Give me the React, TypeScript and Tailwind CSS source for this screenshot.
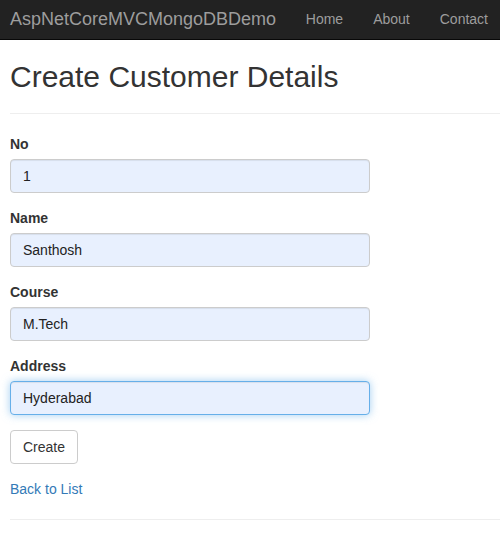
import React from "react";

const font = { fontFamily: '"Liberation Sans", Arial, Helvetica, sans-serif' };

function Field({ label, value, focused = false }: { label: string; value: string; focused?: boolean }) {
  return (
    <div className="mb-[15px]">
      <label className="block mb-[5px] text-[14px] leading-[20px] font-bold text-[#333]">{label}</label>
      <input
        readOnly
        value={value}
        className={`block w-[360px] h-[34px] px-[12px] py-[6px] text-[14px] leading-[20px] text-[#222] bg-[#e8f0fe] rounded-[4px] border outline-none ${
          focused
            ? "border-[#66afe9] shadow-[inset_0_1px_1px_rgba(0,0,0,0.075),0_0_8px_rgba(102,175,233,0.6)]"
            : "border-[#ccc] shadow-[inset_0_1px_1px_rgba(0,0,0,0.075)]"
        }`}
        style={font}
      />
    </div>
  );
}

export default function App() {
  return (
    <div className="min-h-[535px] bg-white text-[#333]" style={font}>
      <header className="h-[40px] bg-[#222] border-b border-[#080808] flex items-center justify-between">
        <a className="pl-[10px] text-[18px] leading-[20px] text-[#9d9d9d] -mt-[2px]">AspNetCoreMVCMongoDBDemo</a>
        <nav className="flex items-center gap-[30px] pr-[12px] text-[14px] leading-[20px] text-[#9d9d9d] -mt-[2px]">
          <a>Home</a>
          <a>About</a>
          <a>Contact</a>
        </nav>
      </header>

      <main className="pl-[10px]">
        <h2 className="mt-[20px] text-[30px] leading-[33px] font-normal text-[#333]">Create Customer Details</h2>
        <hr className="mt-[20px] mb-[20px] border-0 border-t border-[#eee]" />

        <form className="w-[360px]">
          <Field label="No" value="1" />
          <Field label="Name" value="Santhosh" />
          <Field label="Course" value="M.Tech" />
          <Field label="Address" value="Hyderabad" focused />
          <button
            type="button"
            className="h-[34px] px-[12px] py-[6px] text-[14px] leading-[20px] text-[#333] bg-white border border-[#ccc] rounded-[4px]"
            style={font}
          >
            Create
          </button>
        </form>

        <div className="mt-[15px] text-[14px] leading-[20px]">
          <a className="text-[#337ab7]">Back to List</a>
        </div>
        <hr className="mt-[20px] border-0 border-t border-[#eee]" />
      </main>
    </div>
  );
}
